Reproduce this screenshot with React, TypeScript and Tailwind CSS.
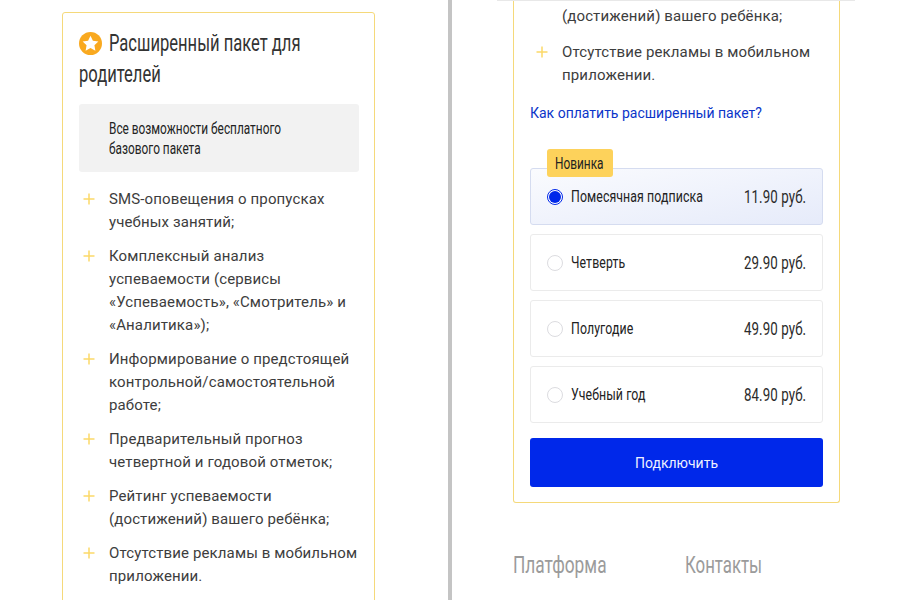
const cond = "inline-block whitespace-nowrap font-['Roboto',sans-serif]";

function Plus() {
  return (
    <svg width="12" height="12" viewBox="0 0 12 12" className="shrink-0 mt-[5px]">
      <path d="M6 0.5V11.5M0.5 6H11.5" stroke="#fcd968" strokeWidth="1.5" />
    </svg>
  );
}

function Item({ lines, pad = "pl-[4px]" }: { lines: string[]; pad?: string }) {
  return (
    <li className={`flex gap-[14px] ${pad}`}>
      <Plus />
      <span>
        {lines.map((l) => (
          <span key={l} className="block whitespace-nowrap">{l}</span>
        ))}
      </span>
    </li>
  );
}

function Option({ label, price, active }: { label: string; price: string; active?: boolean }) {
  return (
    <div
      className={`h-[57px] flex items-center pl-[16px] pr-[16px] rounded-[3px] border ${
        active
          ? "border-[#d5dcf0] bg-gradient-to-br from-[#fafbfe] to-[#e6ebfa]"
          : "border-[#ebebeb] bg-white"
      }`}
    >
      <div className="flex flex-1 min-w-0 items-center gap-[8px]">
        {active ? (
          <span className="w-[16px] h-[16px] shrink-0 rounded-full border border-[#0028ea] flex items-center justify-center bg-white">
            <span className="w-[12px] h-[12px] rounded-full bg-[#0028ea]" />
          </span>
        ) : (
          <span className="w-[16px] h-[16px] shrink-0 rounded-full border border-[#dcdce0] bg-white" />
        )}
        <span className={`${cond} origin-left scale-x-[0.77] text-[16px] text-[#222222]`}>{label}</span>
      </div>
      <span className={`${cond} shrink-0 origin-right scale-x-[0.74] text-[18px] text-[#2b2b2b]`}>{price}</span>
    </div>
  );
}

export default function App() {
  return (
    <div className="w-[900px] h-[600px] overflow-hidden flex bg-white font-['Roboto',sans-serif] text-[15px] leading-[23px] tracking-[0.13px] text-[#3d3d3d]">
      <div className="w-[448px] h-[600px] overflow-hidden pl-[62px] pt-[12px]">
        <div className="w-[313px] h-[640px] border border-[#f5d97a] rounded-[3px] pl-[16px] pr-[15px] pt-[15px]">
          <h2 className="text-[24px] leading-[31px] tracking-normal text-[#333333]">
            <span className="flex items-center gap-[7px]">
              <svg width="23" height="23" viewBox="0 0 24 24" className="shrink-0">
                <circle cx="12" cy="12" r="12" fill="#f9a91f" />
                <path d="M12 3.8l2.5 5.2 5.7.8-4.1 4 1 5.7-5.1-2.7-5.1 2.7 1-5.7-4.1-4 5.7-.8z" fill="#fff" />
              </svg>
              <span className={`${cond} origin-left scale-x-[0.69]`}>Расширенный пакет для</span>
            </span>
            <span className={`${cond} origin-left scale-x-[0.69]`}>родителей</span>
          </h2>
          <div className="mt-[14px] h-[68px] rounded-[3px] bg-[#f2f2f2] pl-[30px] pt-[15px] text-[16px] leading-[20px] tracking-normal text-[#222222]">
            <span className={`${cond} origin-left scale-x-[0.74] block`}>Все возможности бесплатного</span>
            <span className={`${cond} origin-left scale-x-[0.74] block`}>базового пакета</span>
          </div>
          <ul className="mt-[16px] flex flex-col gap-[11px]">
            <Item lines={["SMS-оповещения о пропусках", "учебных занятий;"]} />
            <Item lines={["Комплексный анализ", "успеваемости (сервисы", "«Успеваемость», «Смотритель» и", "«Аналитика»);"]} />
            <Item lines={["Информирование о предстоящей", "контрольной/самостоятельной", "работе;"]} />
            <Item lines={["Предварительный прогноз", "четвертной и годовой отметок;"]} />
            <Item lines={["Рейтинг успеваемости", "(достижений) вашего ребёнка;"]} />
            <Item lines={["Отсутствие рекламы в мобильном", "приложении."]} />
          </ul>
        </div>
      </div>
      <div className="w-[4px] h-[600px] bg-[#c4c4c4]" />
      <div className="w-[448px] h-[600px] overflow-hidden">
        <div className="ml-[45px] w-[358px] h-px bg-[#e8e8e8]" />
        <div className="ml-[61px] w-[327px] h-[502px] border-x border-b border-[#f5d97a] rounded-b-[3px] px-[16px] pt-[4px]">
          <div className="pl-[32px]">(достижений) вашего ребёнка;</div>
          <ul className="mt-[13px]">
            <Item pad="pl-[6px]" lines={["Отсутствие рекламы в мобильном", "приложении."]} />
          </ul>
          <a className="block mt-[16px] text-[14px] leading-[20px] tracking-normal text-[#0b35c9]">Как оплатить расширенный пакет?</a>
          <div className="relative mt-[45px] flex flex-col gap-[9px]">
            <span className="absolute left-[17px] top-[-19px] z-10 h-[28px] w-[66px] rounded-[3px] bg-[#fdd25b] pl-[8px] flex items-center text-[16px] tracking-normal text-[#222222]">
              <span className={`${cond} origin-left scale-x-[0.74]`}>Новинка</span>
            </span>
            <Option label="Помесячная подписка" price="11.90 руб." active />
            <Option label="Четверть" price="29.90 руб." />
            <Option label="Полугодие" price="49.90 руб." />
            <Option label="Учебный год" price="84.90 руб." />
          </div>
          <button className="mt-[15px] w-full h-[49px] pt-[1px] rounded-[3px] bg-[#0028ea] text-[#eef1ff] text-[14px] tracking-normal">
            Подключить
          </button>
        </div>
        <div className="ml-[61px] mt-[46px] flex text-[24px] leading-[32px] tracking-normal text-[#9b9b9b]">
          <span className="w-[172px]"><span className={`${cond} origin-left scale-x-[0.72]`}>Платформа</span></span>
          <span className={`${cond} origin-left scale-x-[0.7]`}>Контакты</span>
        </div>
      </div>
    </div>
  );
}
